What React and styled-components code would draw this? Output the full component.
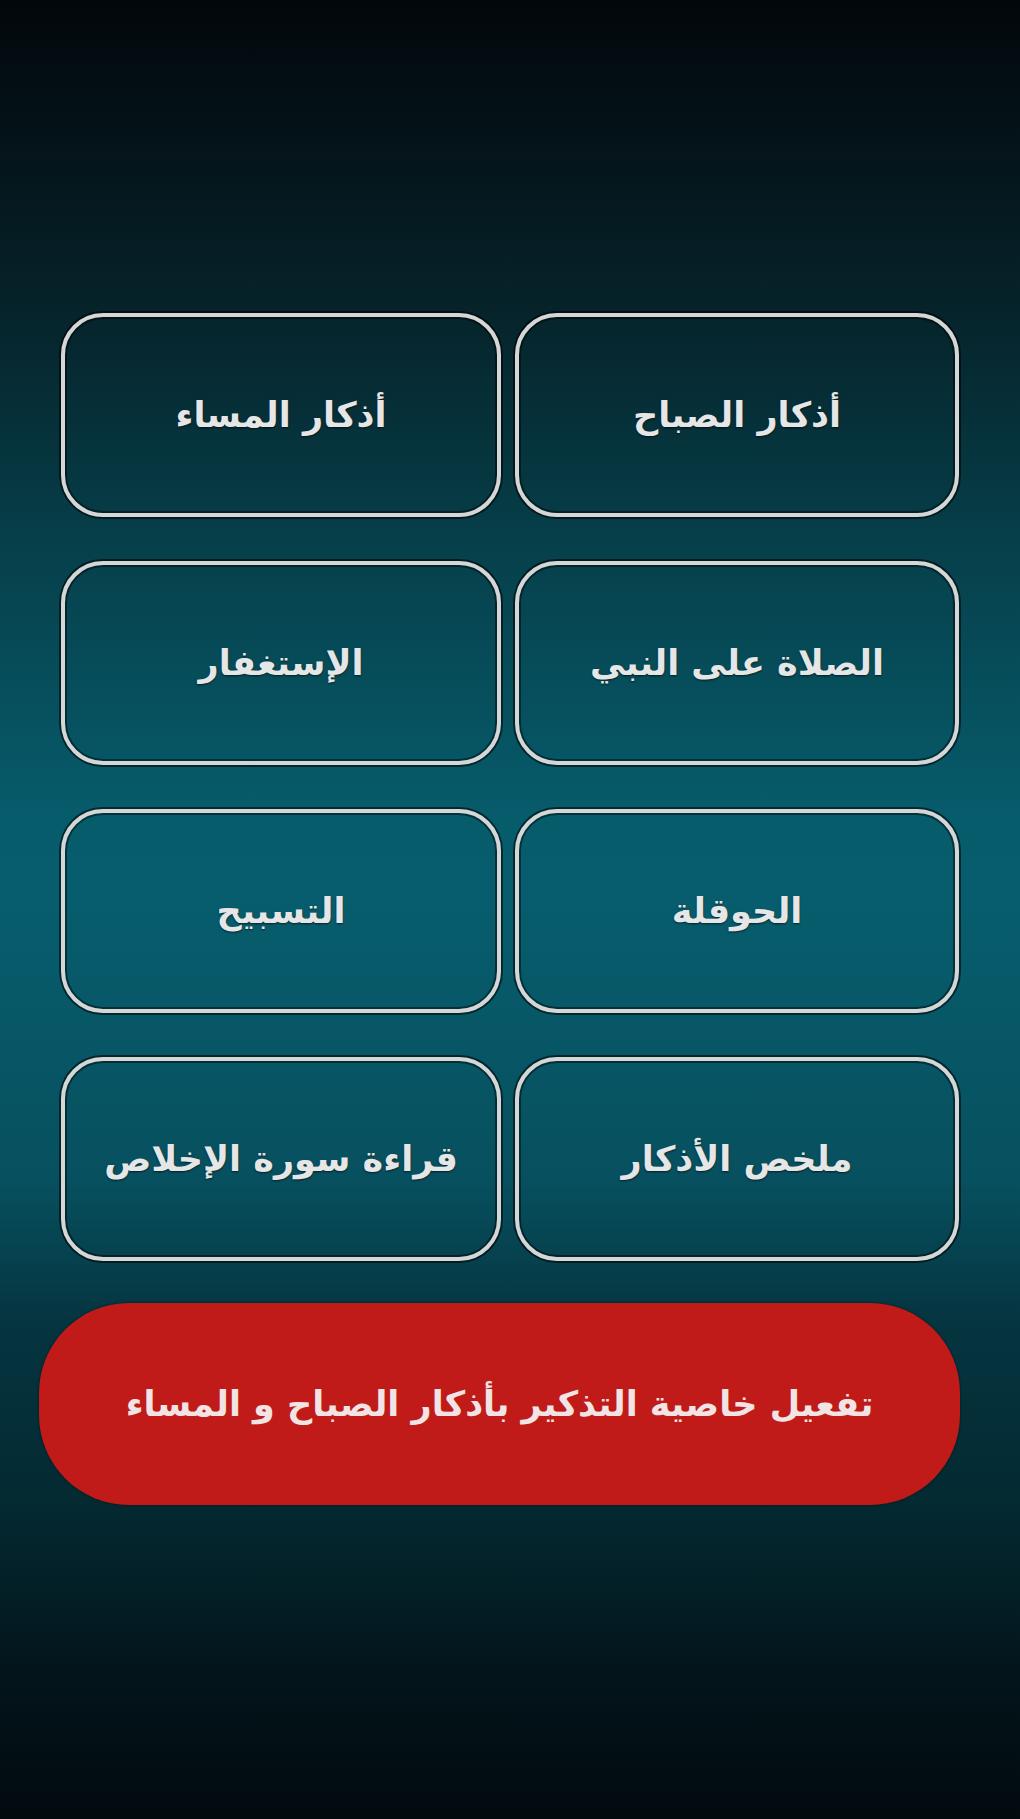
import React from "react";
import styled, { createGlobalStyle } from "styled-components";

const Global = createGlobalStyle`
  html, body { margin: 0; padding: 0; }
  body { background: #02080c; }
`;

const Page = styled.div`
  width: 1020px;
  height: 1819px;
  box-sizing: border-box;
  padding: 313px 61px 0 61px;
  background: linear-gradient(
    to bottom,
    #02070b 0px,
    #04141a 150px,
    #062229 300px,
    #06404b 550px,
    #075c6c 820px,
    #075d6d 900px,
    #07505f 1180px,
    #053540 1320px,
    #042a32 1500px,
    #03141a 1680px,
    #020a0e 1819px
  );
  font-family: "DejaVu Sans", "Noto Sans", sans-serif;
  direction: rtl;
`;

const Grid = styled.div`
  display: grid;
  grid-template-columns: 444px 440px;
  column-gap: 14px;
  row-gap: 44px;
`;

const Card = styled.button`
  height: 204px;
  box-sizing: border-box;
  border: 4px solid #d6d6d6;
  border-radius: 42px;
  background: transparent;
  box-shadow: 0 0 0 2px rgba(0, 0, 0, 0.55), inset 0 0 0 2px rgba(0, 0, 0, 0.45);
  color: #e6e6e6;
  font-family: "DejaVu Sans", sans-serif;
  font-weight: bold;
  font-size: 35px;
  direction: rtl;
  display: flex;
  align-items: center;
  justify-content: center;
  padding: 0;
  text-shadow: 0 1px 2px rgba(0, 0, 0, 0.6);
`;

const Alarm = styled.button`
  margin-top: 42px;
  margin-right: -1px;
  margin-left: -23px;
  width: 921px;
  height: 202px;
  border: none;
  border-radius: 90px;
  background: #c01b18;
  color: #f2e4e4;
  font-family: "DejaVu Sans", sans-serif;
  font-weight: bold;
  font-size: 35px;
  direction: rtl;
  display: flex;
  align-items: center;
  justify-content: center;
  box-shadow: 0 0 3px rgba(0, 0, 0, 0.5);
`;

const items = [
  "أذكار الصباح",
  "أذكار المساء",
  "الصلاة على النبي",
  "الإستغفار",
  "الحوقلة",
  "التسبيح",
  "ملخص الأذكار",
  "قراءة سورة الإخلاص",
];

export default function App() {
  return (
    <>
      <Global />
      <Page>
        <Grid>
          {items.map((t) => (
            <Card key={t}>{t}</Card>
          ))}
        </Grid>
        <Alarm>تفعيل خاصية التذكير بأذكار الصباح و المساء</Alarm>
      </Page>
    </>
  );
}
